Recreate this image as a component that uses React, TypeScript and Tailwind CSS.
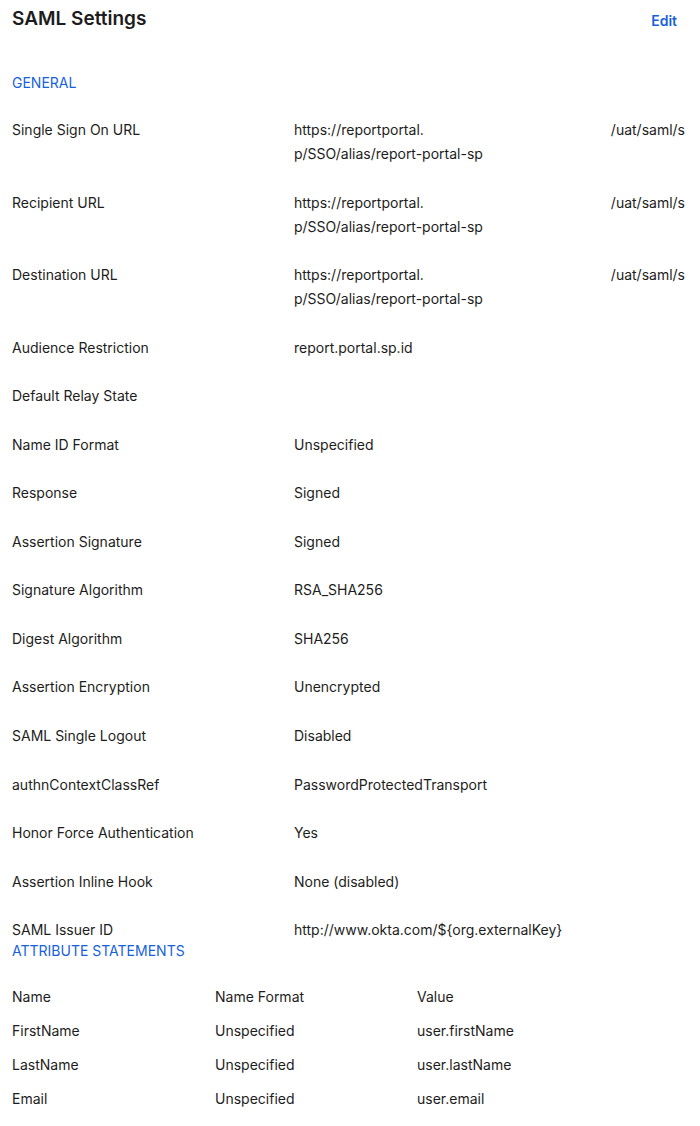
import React from "react";

const font = { fontFamily: "Inter, 'Noto Sans', sans-serif" };

const generalRows: { label: string; value?: string; url?: boolean }[] = [
  { label: "Single Sign On URL", url: true },
  { label: "Recipient URL", url: true },
  { label: "Destination URL", url: true },
  { label: "Audience Restriction", value: "report.portal.sp.id" },
  { label: "Default Relay State", value: "" },
  { label: "Name ID Format", value: "Unspecified" },
  { label: "Response", value: "Signed" },
  { label: "Assertion Signature", value: "Signed" },
  { label: "Signature Algorithm", value: "RSA_SHA256" },
  { label: "Digest Algorithm", value: "SHA256" },
  { label: "Assertion Encryption", value: "Unencrypted" },
  { label: "SAML Single Logout", value: "Disabled" },
  { label: "authnContextClassRef", value: "PasswordProtectedTransport" },
  { label: "Honor Force Authentication", value: "Yes" },
  { label: "Assertion Inline Hook", value: "None (disabled)" },
  { label: "SAML Issuer ID", value: "http://www.okta.com/${org.externalKey}" },
];

const attributes = [
  { name: "FirstName", format: "Unspecified", value: "user.firstName" },
  { name: "LastName", format: "Unspecified", value: "user.lastName" },
  { name: "Email", format: "Unspecified", value: "user.email" },
];

function UrlValue() {
  return (
    <div>
      <div className="flex justify-between">
        <span>https://reportportal.</span>
        <span>/uat/saml/s</span>
      </div>
      <div>p/SSO/alias/report-portal-sp</div>
    </div>
  );
}

export default function App() {
  return (
    <div
      className="w-[700px] min-h-[1126px] bg-white text-[14px] leading-[24px] text-[#1d1d21] overflow-hidden"
      style={font}
    >
      {/* Header */}
      <div className="flex items-center justify-between pl-3 pr-[23px] pt-[5px]">
        <h2 className="text-[19px] leading-[24px] font-semibold">SAML Settings</h2>
        <button className="text-[14px] font-semibold text-[#1662dd] mt-[4px]">Edit</button>
      </div>

      {/* General */}
      <div className="pl-3 pr-[15px]">
        <h3 className="mt-[38px] text-[14px] leading-[24px] text-[#1662dd] uppercase">General</h3>
        <div className="mt-[23px] flex flex-col gap-[24.55px]">
          {generalRows.map((row) => (
            <div key={row.label} className="grid grid-cols-[282px_1fr]">
              <div>{row.label}</div>
              <div className="min-h-[24px]">{row.url ? <UrlValue /> : row.value}</div>
            </div>
          ))}
        </div>

        {/* Attribute statements */}
        <h3 className="text-[14px] leading-[18px] text-[#1662dd] uppercase">Attribute Statements</h3>
        <div className="mt-[25px] flex flex-col gap-[10px]">
          <div className="grid grid-cols-[203px_202px_1fr]">
            <div>Name</div>
            <div>Name Format</div>
            <div>Value</div>
          </div>
          {attributes.map((a) => (
            <div key={a.name} className="grid grid-cols-[203px_202px_1fr]">
              <div>{a.name}</div>
              <div>{a.format}</div>
              <div>{a.value}</div>
            </div>
          ))}
        </div>
      </div>
    </div>
  );
}
